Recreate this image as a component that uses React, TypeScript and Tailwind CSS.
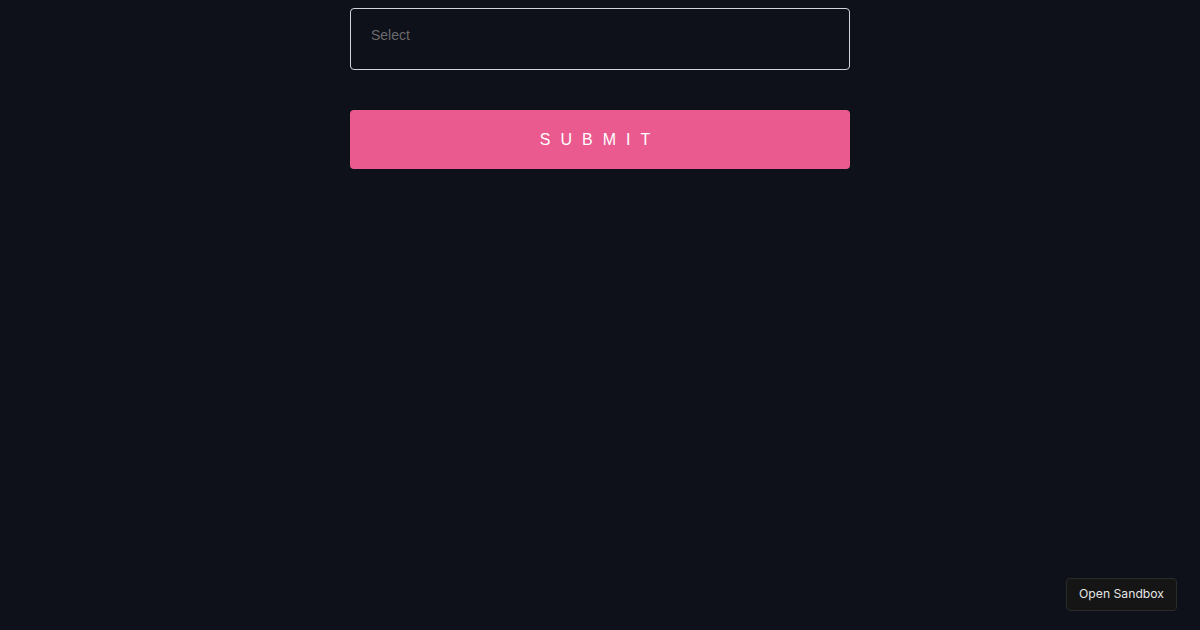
import React from 'react';

const App: React.FC = () => {
  return (
    <div className="min-h-screen w-full bg-[#0e101a] font-['Liberation_Sans',Arial,sans-serif]">
      <div className="mx-auto w-[500px] pt-2">
        <div className="h-[62px] rounded border border-[#d1d5db] px-5 pt-[14px]">
          <span className="text-[14px] leading-5 text-[#6b6b6b]">Select</span>
        </div>
        <button className="mt-10 flex h-[59px] w-full items-center justify-center rounded bg-[#ea5a8f] text-[16px] tracking-[10px] text-white">
          SUBMIT
        </button>
      </div>

      {/* Sandbox link */}
      <button className="fixed bottom-[19px] right-[23px] h-[33px] rounded border border-[#2b2b2b] bg-[#151515] px-[12px] text-[12.2px] text-[#e5e5e5] font-['Inter',sans-serif]">
        Open Sandbox
      </button>
    </div>
  );
};

export default App;
